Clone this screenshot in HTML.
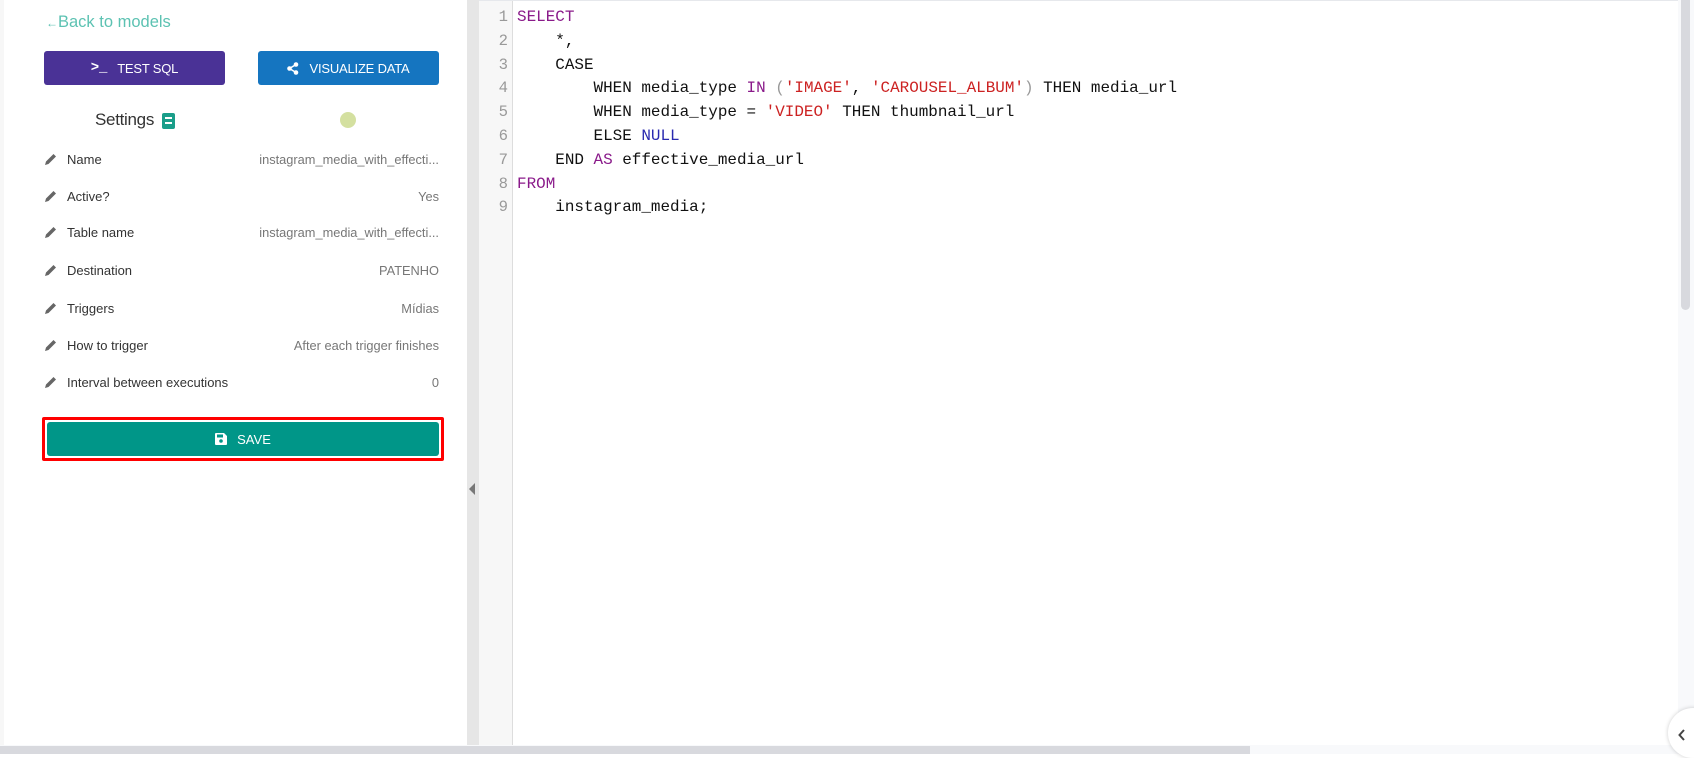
<!DOCTYPE html>
<html><head><meta charset="utf-8"><style>
*{box-sizing:border-box;margin:0;padding:0}
body{width:1694px;height:754px;overflow:hidden;background:#fff;font-family:"Liberation Sans",sans-serif;position:relative}
.left{position:absolute;left:0;top:0;width:467px;height:746px;background:#fff}
.lb{position:absolute;left:0;top:0;width:4px;height:746px;background:#f7f7f7}
.back{position:absolute;left:46px;top:13px;color:#5cc2b2;font-size:16.5px}
.btn{position:absolute;top:51px;height:34px;width:181px;border-radius:3px;color:#fff;font-size:13px;display:flex;align-items:center;justify-content:center;gap:10px;letter-spacing:-0.2px}
.set{position:absolute;left:95px;top:110px;font-size:17px;color:#333;letter-spacing:-0.3px}
.book{position:absolute;left:162px;top:113px;width:13px;height:16px;background:#1a9e8a;border-radius:2px}
.book:after{content:"";position:absolute;left:3px;top:4px;width:7px;height:2px;background:#fff;box-shadow:0 5px 0 #fff}
.dot{position:absolute;left:340px;top:112px;width:16px;height:16px;border-radius:50%;background:#d4e0a0}
.row{position:absolute;left:44px;width:395px;font-size:13px;color:#333;height:18px;display:flex;align-items:center}
.row svg{margin-right:10px}
.row .v{margin-left:auto;color:#777;font-size:12.8px}
.save{position:absolute;left:42px;top:417px;width:402px;height:44px;border:3px solid #f00;border-radius:2px;background:#fff}
.save div{position:absolute;left:2px;top:2px;right:2px;bottom:2px;background:#009688;border-radius:3px;color:#fff;font-size:13px;display:flex;align-items:center;justify-content:center;gap:10px}
.split{position:absolute;left:467px;top:0;width:12px;height:746px;background:#e6e6e6}
.gut{position:absolute;left:479px;top:0;width:34px;height:746px;background:#f7f7f7;border-right:1px solid #ddd}
.code{position:absolute;left:517px;top:6px;font-family:"Liberation Mono","DejaVu Sans Mono",monospace;font-size:15.95px;line-height:23.8px;color:#111;white-space:pre}
.nums{position:absolute;left:479px;width:29px;top:6px;font-family:"Liberation Mono",monospace;font-size:15.6px;line-height:23.8px;color:#999;text-align:right;white-space:pre}
.k{color:#8a1a8a}.b{color:#2a2ab0}.s{color:#c22}.p{color:#999}
.topb{position:absolute;left:479px;top:0;width:1201px;height:1px;background:#e6e8ec}
.vs{position:absolute;left:1678px;top:0;width:16px;height:746px;background:#f8f9fb}
.vs div{position:absolute;left:3px;top:0;width:9px;height:310px;background:#d8d9de;border-radius:0 0 5px 5px}
.hs{position:absolute;left:0;top:745px;width:1694px;height:9px;background:#f8f9fb}
.hs div{position:absolute;left:0;top:1px;width:1250px;height:8px;background:#d8d9de}
.circ{position:absolute;left:1668px;top:708px;width:50px;height:50px;border-radius:50%;background:#fff;box-shadow:0 0 4px rgba(0,0,0,.2)}
</style></head><body>
<div class="left">
<div class="lb"></div>
<div class="back"><span style="font-size:12px">←</span>Back to models</div>
<div class="btn" style="left:44px;background:#4a3296"><b style="font-family:'Liberation Mono',monospace;font-size:14px">&gt;_</b>TEST SQL</div>
<div class="btn" style="left:258px;background:#1575c0"><svg width="12" height="13" viewBox="0 0 12 13"><circle cx="9" cy="2.5" r="2.3" fill="#fff"/><circle cx="2.5" cy="6.5" r="2.3" fill="#fff"/><circle cx="9" cy="10.5" r="2.3" fill="#fff"/><path d="M9 2.5L2.5 6.5L9 10.5" stroke="#fff" stroke-width="1.5" fill="none"/></svg>VISUALIZE DATA</div>
<div class="set">Settings</div><div class="book"></div>
<div class="dot"></div>
<div class="row" style="top:150px"><svg width="13" height="13" viewBox="0 0 13 13"><path d="M1 12l1-3.5L9.5 1 12 3.5 4.5 11z" fill="#666"/></svg>Name<span class="v">instagram_media_with_effecti...</span></div>
<div class="row" style="top:187px"><svg width="13" height="13" viewBox="0 0 13 13"><path d="M1 12l1-3.5L9.5 1 12 3.5 4.5 11z" fill="#666"/></svg>Active?<span class="v">Yes</span></div>
<div class="row" style="top:223px"><svg width="13" height="13" viewBox="0 0 13 13"><path d="M1 12l1-3.5L9.5 1 12 3.5 4.5 11z" fill="#666"/></svg>Table name<span class="v">instagram_media_with_effecti...</span></div>
<div class="row" style="top:261px"><svg width="13" height="13" viewBox="0 0 13 13"><path d="M1 12l1-3.5L9.5 1 12 3.5 4.5 11z" fill="#666"/></svg>Destination<span class="v">PATENHO</span></div>
<div class="row" style="top:299px"><svg width="13" height="13" viewBox="0 0 13 13"><path d="M1 12l1-3.5L9.5 1 12 3.5 4.5 11z" fill="#666"/></svg>Triggers<span class="v">Mídias</span></div>
<div class="row" style="top:336px"><svg width="13" height="13" viewBox="0 0 13 13"><path d="M1 12l1-3.5L9.5 1 12 3.5 4.5 11z" fill="#666"/></svg>How to trigger<span class="v">After each trigger finishes</span></div>
<div class="row" style="top:373px"><svg width="13" height="13" viewBox="0 0 13 13"><path d="M1 12l1-3.5L9.5 1 12 3.5 4.5 11z" fill="#666"/></svg>Interval between executions<span class="v">0</span></div>
<div class="save"><div><svg width="12" height="12" viewBox="0 0 12 12"><path d="M0 1a1 1 0 011-1h8l3 3v8a1 1 0 01-1 1H1a1 1 0 01-1-1z" fill="#fff"/><rect x="2" y="1.5" width="6" height="3" fill="#009688"/><circle cx="6" cy="8" r="1.8" fill="#009688"/></svg>SAVE</div></div>
</div>
<div class="split"><svg style="position:absolute;left:2px;top:483px" width="7" height="12"><path d="M6 0L0 6l6 6z" fill="#777"/></svg></div>
<div class="gut"></div>
<div class="topb"></div>
<div class="nums">1
2
3
4
5
6
7
8
9</div>
<div class="code"><span class="k">SELECT</span>
    *,
    CASE
        WHEN media_type <span class="k">IN</span> <span class="p">(</span><span class="s">'IMAGE'</span>, <span class="s">'CAROUSEL_ALBUM'</span><span class="p">)</span> THEN media_url
        WHEN media_type = <span class="s">'VIDEO'</span> THEN thumbnail_url
        ELSE <span class="b">NULL</span>
    END <span class="k">AS</span> effective_media_url
<span class="k">FROM</span>
    instagram_media;</div>
<div class="vs"><div></div></div>
<div class="hs"><div></div></div>
<div class="circ"><svg style="position:absolute;left:10px;top:21px" width="8" height="12"><path d="M6 1L1.5 6 6 11" stroke="#444" stroke-width="2" fill="none"/></svg></div>
</body></html>
